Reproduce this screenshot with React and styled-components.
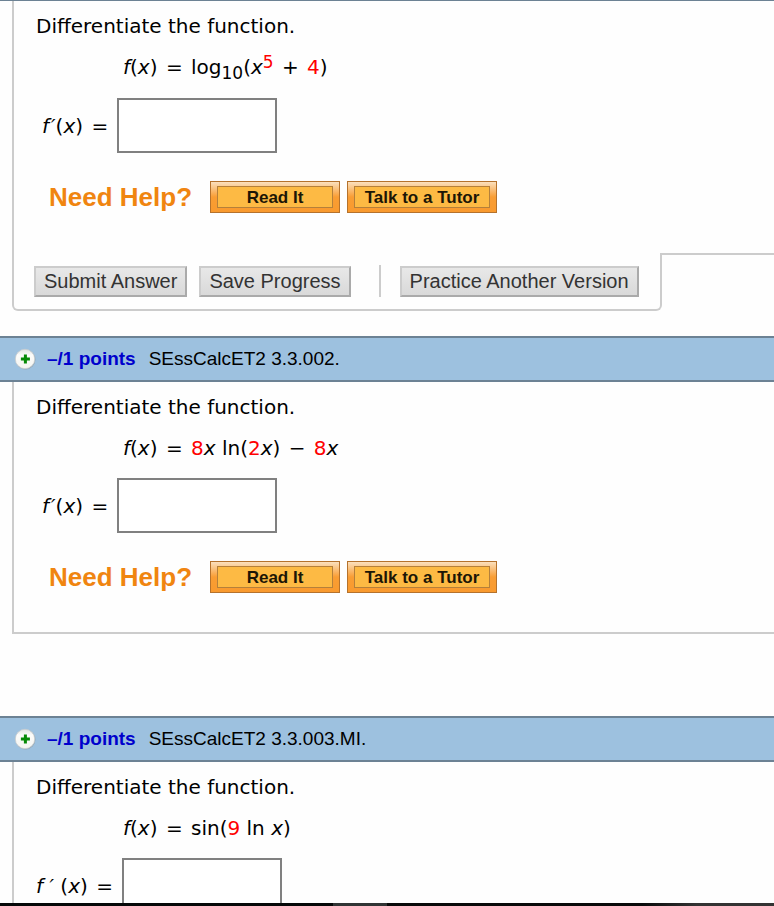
import React, { Component } from "react";
import styled, { createGlobalStyle } from "styled-components";

class Problem extends Component {
  constructor(props) {
    super(props);
    this.state = {
      answer: ""
    };
  }

  handleChanges = event => {
    this.setState({ answer: event.target.value });
  };

  render() {
    const { id, title, formula, label, wideLabel, help, submission } = this.props;
    return (
      <section>
        {title ? (
          <Header>
            <ExpandButton aria-label="Expand">
              <PlusIcon />
            </ExpandButton>
            <Points href="#points">–/1 points</Points>
            <Title>{title}</Title>
          </Header>
        ) : (
          <HeaderEdge />
        )}
        <Body $open={submission}>
          <Prompt>Differentiate the function.</Prompt>
          <Formula>{formula}</Formula>
          <AnswerRow $wide={wideLabel}>
            <label htmlFor={id}>{label}</label>
            <AnswerInput
              type="text"
              id={id}
              value={this.state.answer}
              onChange={this.handleChanges}
            />
          </AnswerRow>
          {help && (
            <HelpRow>
              <HelpTitle>Need Help?</HelpTitle>
              <HelpButton $width="130px">
                <span>Read It</span>
              </HelpButton>
              <HelpButton $width="150px">
                <span>Talk to a Tutor</span>
              </HelpButton>
            </HelpRow>
          )}
        </Body>
        {submission && (
          <Footer>
            <FooterTab>
              <GreyButton>Submit Answer</GreyButton>
              <GreyButton>Save Progress</GreyButton>
              <Divider />
              <GreyButton>Practice Another Version</GreyButton>
            </FooterTab>
            <FooterLine />
          </Footer>
        )}
      </section>
    );
  }
}

const PlusIcon = () => (
  <svg width="22" height="22" viewBox="0 0 22 22">
    <defs>
      <linearGradient id="disc" x1="0" y1="0" x2="0" y2="1">
        <stop offset="0" stopColor="#e4e4e2" />
        <stop offset="0.3" stopColor="#fcfcfa" />
        <stop offset="1" stopColor="#f4f4f0" />
      </linearGradient>
    </defs>
    <circle cx="11.5" cy="11.5" r="10" fill="#8d9aa3" opacity="0.7" />
    <circle cx="11" cy="11" r="9.7" fill="url(#disc)" stroke="#c9ced0" strokeWidth="0.8" />
    <path d="M9.9 6.5h3v3h3v3h-3v3h-3v-3h-3v-3h3z" fill="#078a07" />
  </svg>
);

export default function App() {
  return (
    <>
      <GlobalStyle />
      <Page>
        <Assignment>
          {problems.map(problem => (
            <Problem key={problem.id} {...problem} />
          ))}
        </Assignment>
        <Taskbar />
      </Page>
    </>
  );
}

const GlobalStyle = createGlobalStyle`
  * {
    box-sizing: border-box;
  }

  body {
    margin: 0;
    background: #fefefe;
    color: #000;
    font-family: Verdana, "DejaVu Sans", sans-serif;
    font-size: 20px;
  }
`;

const Page = styled.div`
  display: flex;
  flex-direction: column;
  height: 100vh;
`;

const Assignment = styled.main`
  flex: 1;
  min-height: 0;
  overflow-y: auto;
  scrollbar-width: none;
`;

const Taskbar = styled.div`
  flex: none;
  height: 3px;
  background: linear-gradient(to right, #050808 43%, #303434 43%, #303434 50%, #080a0a 50%, #080a0a 83%, #333 90%);
`;

const HeaderEdge = styled.div`
  height: 1px;
  background: #6c8294;
`;

const Header = styled.header`
  display: flex;
  align-items: center;
  height: 46px;
  padding-left: 14px;
  border: solid #6c8294;
  border-width: 2px 0;
  background: #9dc1df;
  font-family: Arial, "Liberation Sans", sans-serif;
  font-size: 19px;
`;

const ExpandButton = styled.button`
  display: flex;
  padding: 0;
  border: none;
  background: none;
`;

const Points = styled.a`
  margin: 0 13px 0 11px;
  color: #0000cc;
  font-weight: bold;
  text-decoration: none;
`;

const Title = styled.span`
  color: #000;
`;

const Body = styled.div`
  margin-left: 12px;
  padding: 10px 0 ${props => (props.$open ? "40px" : "39px")} 22px;
  border-left: 2px solid #ccc;
  border-bottom: ${props => (props.$open ? "none" : "2px solid #ccc")};
  margin-bottom: ${props => (props.$open ? "0" : "82px")};
`;

const Prompt = styled.p`
  margin: 0;
  line-height: 30px;
`;

const Formula = styled.p`
  margin: 11px 0 15px 87px;
  line-height: 30px;
`;

const Red = styled.span`
  color: #f00;
`;

const Op = styled.span`
  margin: 0 2px;
`;

const Sub = styled.sub`
  font-size: 17px;
  line-height: 20px;
  vertical-align: -5px;
`;

const Sup = styled.sup`
  color: #f00;
  font-size: 17px;
  line-height: 1;
  vertical-align: 6px;
`;

const AnswerRow = styled.div`
  display: flex;
  align-items: center;
  gap: 7px;
  padding-left: ${props => (props.$wide ? "0" : "6px")};
`;

const AnswerInput = styled.input`
  width: 160px;
  height: 55px;
  padding: 4px 8px;
  border: 2px solid #808080;
  background: #fff;
  font: inherit;
`;

const HelpRow = styled.div`
  display: flex;
  align-items: center;
  gap: 7px;
  margin-top: 28px;
  padding-left: 13px;
  font-family: Arial, "Liberation Sans", sans-serif;
  font-weight: bold;
`;

const HelpTitle = styled.span`
  margin-right: 11px;
  color: #f08510;
  font-size: 26px;
  line-height: 32px;
`;

const HelpButton = styled.button`
  display: flex;
  width: ${props => props.$width};
  height: 32px;
  padding: 4px 6px;
  border: 1px solid #b5722c;
  background: linear-gradient(#fbe0bd, #f99d33 50%, #f99a2e);
  color: #1c1606;
  font: inherit;
  font-size: 17px;

  span {
    flex: 1;
    border: 1px solid #b5803a;
    background: #fdba44;
    line-height: 22px;
    text-align: center;
  }
`;

const Footer = styled.div`
  display: flex;
  margin: 0 0 25px 12px;
`;

const FooterTab = styled.div`
  display: flex;
  align-items: center;
  gap: 12px;
  height: 58px;
  padding: 0 21px 0 20px;
  border: solid #ccc;
  border-width: 0 2px 2px;
  border-radius: 0 0 6px 6px;
`;

const FooterLine = styled.div`
  flex: 1;
  border-top: 2px solid #ccc;
`;

const GreyButton = styled.button`
  height: 31px;
  padding: 0 8px;
  border: 2px solid;
  border-color: #ccc #aaa #aaa #ccc;
  background: linear-gradient(#e8e8e8, #d9d9d9);
  color: #333;
  font-family: Arial, "Liberation Sans", sans-serif;
  font-size: 20px;
  line-height: 27px;
  white-space: nowrap;
`;

const Divider = styled.div`
  width: 2px;
  height: 32px;
  margin: 0 7px 0 16px;
  background: #ccc;
`;

const problems = [
  {
    id: "q1",
    formula: (
      <>
        <i>f</i>(<i>x</i>) <Op>=</Op> log<Sub>10</Sub>(<i>x</i><Sup>5</Sup> <Op>+</Op> <Red>4</Red>)
      </>
    ),
    label: <><i>f{"\u200a"}′</i>(<i>x</i>) <Op>=</Op></>,
    help: true,
    submission: true
  },
  {
    id: "q2",
    title: "SEssCalcET2 3.3.002.",
    formula: (
      <>
        <i>f</i>(<i>x</i>) <Op>=</Op> <Red>8</Red><i>x</i> ln(<Red>2</Red><i>x</i>) <Op>−</Op> <Red>8</Red><i>x</i>
      </>
    ),
    label: <><i>f{"\u200a"}′</i>(<i>x</i>) <Op>=</Op></>,
    help: true
  },
  {
    id: "q3",
    title: "SEssCalcET2 3.3.003.MI.",
    formula: (
      <>
        <i>f</i>(<i>x</i>) <Op>=</Op> sin(<Red>9</Red> ln <i>x</i>)
      </>
    ),
    label: <><i>f ′</i> (<i>x</i>) <Op>=</Op></>,
    wideLabel: true
  }
];
